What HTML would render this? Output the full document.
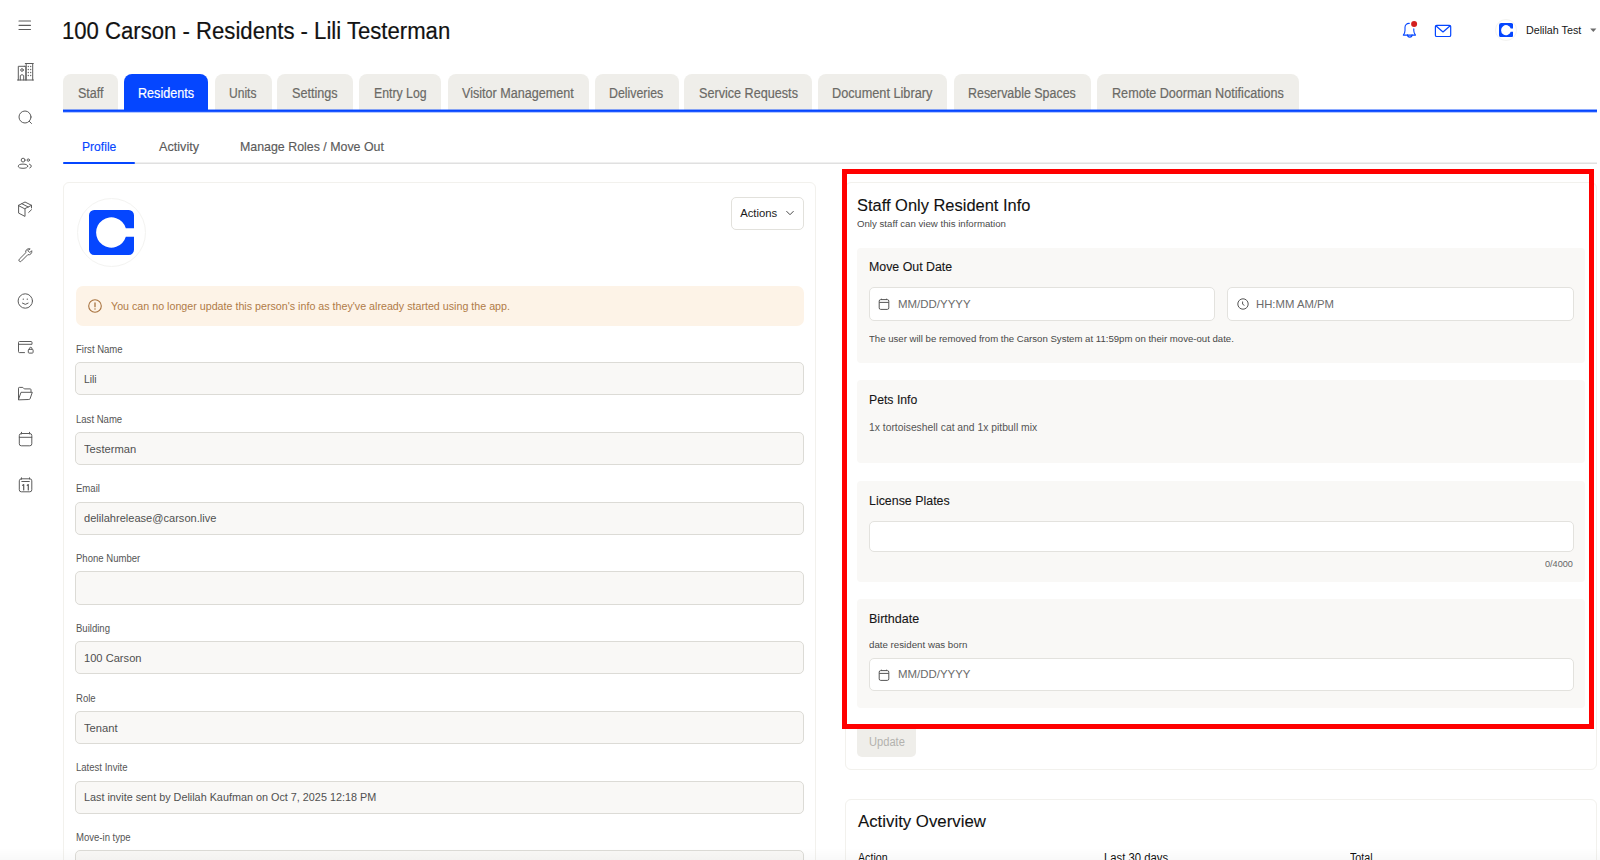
<!DOCTYPE html>
<html><head><meta charset="utf-8"><title>100 Carson - Residents - Lili Testerman</title>
<style>
html,body{margin:0;padding:0;background:#fff;width:1600px;height:860px;overflow:hidden;position:relative}
body{font-family:"Liberation Sans", sans-serif}
.t{position:absolute;white-space:nowrap}
.r{position:absolute}
</style></head><body>
<svg class="r" style="left:15px;top:15px" width="20" height="20" viewBox="0 0 20 20"><g fill="none" stroke="#5c5c5c" stroke-width="1.15" stroke-linecap="round"><path d="M4 6h11.5M4 10.3h11.5M4 14.5h11.5"/></g></svg>
<svg class="r" style="left:15px;top:61px" width="20" height="20" viewBox="0 0 20 20"><g fill="none" stroke="#5c5c5c" stroke-width="1.0" stroke-linecap="round" stroke-linejoin="round"><path d="M2.5 19h16M3.3 19V5.3h7.5V19M9.8 5.3v0M11.2 19V2.5h6.5V19M10.3 2.5h8"/><circle cx="7" cy="9" r="1.3"/><path d="M5.3 19v-4.5q1.7-1.7 3.4 0V19"/><path d="M13.3 5.5v.1M15.7 5.5v.1M13.3 8.5v.1M15.7 8.5v.1M13.3 11.5v.1M15.7 11.5v.1M13.3 14.5v.1M15.7 14.5v.1" stroke-width="1.3"/></g></svg>
<svg class="r" style="left:15px;top:107px" width="20" height="20" viewBox="0 0 20 20"><g fill="none" stroke="#5c5c5c" stroke-width="1.0" stroke-linecap="round" stroke-linejoin="round"><circle cx="10" cy="10" r="6"/><path d="M14.3 14.3l2.2 2.2"/></g></svg>
<svg class="r" style="left:15px;top:153px" width="20" height="20" viewBox="0 0 20 20"><g fill="none" stroke="#5c5c5c" stroke-width="1.0" stroke-linecap="round" stroke-linejoin="round"><circle cx="8.1" cy="7.1" r="1.9"/><circle cx="13.3" cy="7.1" r="1.2"/><ellipse cx="8" cy="13.2" rx="4.7" ry="2.1"/><path d="M14.5 11.2q1.8.6 1.8 1.9t-1.5 1.9"/></g></svg>
<svg class="r" style="left:15px;top:199px" width="20" height="20" viewBox="0 0 20 20"><g fill="none" stroke="#5c5c5c" stroke-width="1.0" stroke-linecap="round" stroke-linejoin="round"><path d="M3.6 6.3L10 3l6.5 3.3L10 9.6z"/><path d="M3.6 6.3v7.8L10 17.4V9.6"/><path d="M6.8 4.7l6.4 3.3"/><path d="M16.5 6.3v2.6M16.5 10.7l-2.8 2.7"/></g></svg>
<svg class="r" style="left:15px;top:245px" width="20" height="20" viewBox="0 0 20 20"><g fill="none" stroke="#5c5c5c" stroke-width="1.0" stroke-linecap="round" stroke-linejoin="round"><path d="M14.8 3.8a3.2 3.2 0 0 0-4 3.9L4.3 14.2a1.4 1.4 0 0 0 2 2l6.5-6.5a3.2 3.2 0 0 0 3.9-4l-1.9 1.9-1.8-1.8z"/></g></svg>
<svg class="r" style="left:15px;top:291px" width="20" height="20" viewBox="0 0 20 20"><g fill="none" stroke="#5c5c5c" stroke-width="1.0" stroke-linecap="round" stroke-linejoin="round"><circle cx="10.3" cy="10" r="7.2"/><path d="M7.4 12.2q2.9 2.6 5.8 0"/><path d="M8.3 8.1v.1M12.3 8.1v.1" stroke-width="1.3"/></g></svg>
<svg class="r" style="left:15px;top:337px" width="20" height="20" viewBox="0 0 20 20"><g fill="none" stroke="#5c5c5c" stroke-width="1.0" stroke-linecap="round" stroke-linejoin="round"><path d="M9.5 15.6H4.5a1 1 0 0 1-1-1V5.5a1 1 0 0 1 1-1h11.5a1 1 0 0 1 1 1v1.8H3.5"/><rect x="13.3" y="12.3" width="4.8" height="3.8" rx=".8"/><path d="M14.5 12.3v-.8a1.2 1.2 0 0 1 2.4 0v.8"/></g></svg>
<svg class="r" style="left:15px;top:383px" width="20" height="20" viewBox="0 0 20 20"><g fill="none" stroke="#5c5c5c" stroke-width="1.0" stroke-linecap="round" stroke-linejoin="round"><path d="M3.5 16.5V5.2a.8.8 0 0 1 .8-.8h3.5l1.5 1.5h5.9a.8.8 0 0 1 .8.8v2"/><path d="M3.5 16.5l2.5-7.2h11.3l-2.3 6.6a.8.8 0 0 1-.8.6z"/></g></svg>
<svg class="r" style="left:15px;top:429px" width="20" height="20" viewBox="0 0 20 20"><g fill="none" stroke="#5c5c5c" stroke-width="1.0" stroke-linecap="round" stroke-linejoin="round"><rect x="4.3" y="4.5" width="12.5" height="12.3" rx="2"/><path d="M4.3 8.3h12.5M6.5 3.3v1.6M14.5 3.3v1.6"/></g></svg>
<svg class="r" style="left:15px;top:475px" width="20" height="20" viewBox="0 0 20 20"><g fill="none" stroke="#5c5c5c" stroke-width="1.0" stroke-linecap="round" stroke-linejoin="round"><rect x="4.3" y="3.8" width="12.5" height="13" rx="2"/><path d="M6.8 6.5h7.5M6.5 2.8v1.2M14.5 2.8v1.2"/><path d="M7.7 10.3l1-.7v5.3M12.3 10.3l1-.7v5.3" stroke-width="1.2"/></g></svg>
<div class="t" style="left:62.06px;top:20px;font-size:23.5px;line-height:23.5px;color:#121212;transform:scaleX(0.9416);transform-origin:0 0;-webkit-text-stroke:0.2px #121212;">100 Carson - Residents - Lili Testerman</div>
<svg class="r" style="left:1400px;top:20px" width="20" height="20" viewBox="0 0 20 20"><g fill="none" stroke="#0546ff" stroke-width="1.1" stroke-linecap="round" stroke-linejoin="round"><path d="M9.3 3.4a3.8 3.8 0 0 0-4.3 3.8v3.3q0 2.4-1.7 4.6h12.2q-1.7-2.2-1.7-4.3V8.9"/><path d="M7.5 14.8a2.3 2.3 0 0 0 4.6 0"/></g><circle cx="14.1" cy="4.1" r="3" fill="#d3201f"/></svg>
<svg class="r" style="left:1433px;top:23px" width="20" height="16" viewBox="0 0 20 16"><rect x="2.4" y="2.3" width="15.3" height="11.2" rx="1.3" fill="none" stroke="#0546ff" stroke-width="1.2"/><path d="M2.8 2.8l7.2 6.2 7.2-6.2" fill="none" stroke="#0546ff" stroke-width="1.2" stroke-linejoin="round"/></svg>
<div class="r" style="left:1495px;top:19px;width:22px;height:22px;border-radius:50%;border:1px solid #f3f3f1;box-sizing:border-box"></div>
<svg class="r" style="left:1499px;top:23.2px" width="14.3" height="14.3" viewBox="0 0 100 100"><path fill="#0546ff" d="M16 0H84A16 16 0 0 1 100 16V38H82.38A35 35 0 1 0 82.38 62H100V84A16 16 0 0 1 84 100H16A16 16 0 0 1 0 84V16A16 16 0 0 1 16 0z"/></svg>
<div class="t" style="left:1525.70px;top:25px;font-size:11.3px;line-height:11.3px;color:#161616;transform:scaleX(0.9492);transform-origin:0 0;">Delilah Test</div>
<svg class="r" style="left:1588px;top:26px" width="10" height="8" viewBox="0 0 10 8"><path d="M2.2 2.4h6.2L5.3 6.1z" fill="#6c6c6c"/></svg>
<div class="r" style="left:63px;top:73.8px;width:55px;height:36.2px;background:#efeeea;border-radius:8px 8px 0 0"></div>
<div class="t" style="left:77.70px;top:86px;font-size:14px;line-height:14px;color:#6b6a66;transform:scaleX(0.8931);transform-origin:0 0;-webkit-text-stroke:0.2px #6b6a66;">Staff</div>
<div class="r" style="left:124px;top:73.8px;width:84.3px;height:36.2px;background:#0546ff;border-radius:8px 8px 0 0"></div>
<div class="t" style="left:138.40px;top:86px;font-size:14px;line-height:14px;color:#ffffff;transform:scaleX(0.9000);transform-origin:0 0;-webkit-text-stroke:0.2px #ffffff;">Residents</div>
<div class="r" style="left:214.8px;top:73.8px;width:57.4px;height:36.2px;background:#efeeea;border-radius:8px 8px 0 0"></div>
<div class="t" style="left:229.40px;top:86px;font-size:14px;line-height:14px;color:#6b6a66;transform:scaleX(0.8625);transform-origin:0 0;-webkit-text-stroke:0.2px #6b6a66;">Units</div>
<div class="r" style="left:277.4px;top:73.8px;width:75.6px;height:36.2px;background:#efeeea;border-radius:8px 8px 0 0"></div>
<div class="t" style="left:292.30px;top:86px;font-size:14px;line-height:14px;color:#6b6a66;transform:scaleX(0.9020);transform-origin:0 0;-webkit-text-stroke:0.2px #6b6a66;">Settings</div>
<div class="r" style="left:359.4px;top:73.8px;width:81.6px;height:36.2px;background:#efeeea;border-radius:8px 8px 0 0"></div>
<div class="t" style="left:374.00px;top:86px;font-size:14px;line-height:14px;color:#6b6a66;transform:scaleX(0.8783);transform-origin:0 0;-webkit-text-stroke:0.2px #6b6a66;">Entry Log</div>
<div class="r" style="left:447.5px;top:73.8px;width:141.0px;height:36.2px;background:#efeeea;border-radius:8px 8px 0 0"></div>
<div class="t" style="left:461.80px;top:86px;font-size:14px;line-height:14px;color:#6b6a66;transform:scaleX(0.8992);transform-origin:0 0;-webkit-text-stroke:0.2px #6b6a66;">Visitor Management</div>
<div class="r" style="left:594.9px;top:73.8px;width:84.0px;height:36.2px;background:#efeeea;border-radius:8px 8px 0 0"></div>
<div class="t" style="left:609.20px;top:86px;font-size:14px;line-height:14px;color:#6b6a66;transform:scaleX(0.8823);transform-origin:0 0;-webkit-text-stroke:0.2px #6b6a66;">Deliveries</div>
<div class="r" style="left:684.2px;top:73.8px;width:128.1px;height:36.2px;background:#efeeea;border-radius:8px 8px 0 0"></div>
<div class="t" style="left:698.50px;top:86px;font-size:14px;line-height:14px;color:#6b6a66;transform:scaleX(0.9018);transform-origin:0 0;-webkit-text-stroke:0.2px #6b6a66;">Service Requests</div>
<div class="r" style="left:818.3px;top:73.8px;width:129.0px;height:36.2px;background:#efeeea;border-radius:8px 8px 0 0"></div>
<div class="t" style="left:832.40px;top:86px;font-size:14px;line-height:14px;color:#6b6a66;transform:scaleX(0.9081);transform-origin:0 0;-webkit-text-stroke:0.2px #6b6a66;">Document Library</div>
<div class="r" style="left:953.8px;top:73.8px;width:136.8px;height:36.2px;background:#efeeea;border-radius:8px 8px 0 0"></div>
<div class="t" style="left:968.40px;top:86px;font-size:14px;line-height:14px;color:#6b6a66;transform:scaleX(0.8877);transform-origin:0 0;-webkit-text-stroke:0.2px #6b6a66;">Reservable Spaces</div>
<div class="r" style="left:1097px;top:73.8px;width:201.6px;height:36.2px;background:#efeeea;border-radius:8px 8px 0 0"></div>
<div class="t" style="left:1111.70px;top:86px;font-size:14px;line-height:14px;color:#6b6a66;transform:scaleX(0.9016);transform-origin:0 0;-webkit-text-stroke:0.2px #6b6a66;">Remote Doorman Notifications</div>
<div class="r" style="left:63px;top:109px;width:1534.2px;height:4px;background:linear-gradient(to bottom, rgba(5,70,255,.45) 0px, rgba(5,70,255,.45) 1px, #0546ff 1px, #0546ff 2px, rgba(5,70,255,.9) 2px, rgba(5,70,255,.9) 3px, rgba(5,70,255,.3) 3px, rgba(5,70,255,.3) 4px)"></div>
<div class="t" style="left:81.80px;top:141px;font-size:12.8px;line-height:12.8px;color:#0546ff;transform:scaleX(0.9459);transform-origin:0 0;-webkit-text-stroke:0.15px #0546ff;">Profile</div>
<div class="t" style="left:158.50px;top:141px;font-size:12.8px;line-height:12.8px;color:#5b5b5b;transform:scaleX(0.9878);transform-origin:0 0;-webkit-text-stroke:0.15px #5b5b5b;">Activity</div>
<div class="t" style="left:240.40px;top:141px;font-size:12.8px;line-height:12.8px;color:#5b5b5b;transform:scaleX(0.9678);transform-origin:0 0;-webkit-text-stroke:0.15px #5b5b5b;">Manage Roles / Move Out</div>
<div class="r" style="left:63px;top:162px;width:1534.2px;height:2px;background:linear-gradient(to bottom, #efefef 0px, #efefef 1px, #e0e0e0 1px, #e0e0e0 2px)"></div>
<div class="r" style="left:63px;top:162px;width:72px;height:2.2px;background:#0546ff;border-radius:1px"></div>
<div class="r" style="left:63px;top:182px;width:753px;height:720px;border:1px solid #f2f1ed;border-radius:6px;box-sizing:border-box;background:#fff"></div>
<div class="r" style="left:77px;top:197.8px;width:69px;height:69px;border-radius:50%;border:1px solid #f3f3f1;box-sizing:border-box"></div>
<svg class="r" style="left:89px;top:210px" width="45" height="45" viewBox="0 0 100 100"><path fill="#0546ff" d="M11.5 0H88.5A11.5 11.5 0 0 1 100 11.5V40.5H81.83A33.7 33.7 0 1 0 81.83 59.5H100V88.5A11.5 11.5 0 0 1 88.5 100H11.5A11.5 11.5 0 0 1 0 88.5V11.5A11.5 11.5 0 0 1 11.5 0z"/></svg>
<div class="r" style="left:730.5px;top:197.1px;width:73.2px;height:32.5px;border:1px solid #e2e1dc;border-radius:5px;box-sizing:border-box;background:#fff"></div>
<div class="t" style="left:740.20px;top:208px;font-size:11.3px;line-height:11.3px;color:#1a1a1a;transform:scaleX(1.0000);transform-origin:0 0;">Actions</div>
<svg class="r" style="left:784px;top:208px" width="12" height="10" viewBox="0 0 12 10"><path d="M2.7 3.4l3.3 3.3 3.3-3.3" fill="none" stroke="#333" stroke-width="0.9" stroke-linecap="round" stroke-linejoin="round"/></svg>
<div class="r" style="left:75.8px;top:286px;width:728.2px;height:40px;background:#fdf3e7;border-radius:7px"></div>
<svg class="r" style="left:87px;top:298px" width="16" height="16" viewBox="0 0 16 16"><circle cx="8" cy="8" r="6.3" fill="none" stroke="#a8733f" stroke-width="1.1"/><path d="M8 4.9v3.8" stroke="#a8733f" stroke-width="1.3" stroke-linecap="round"/><circle cx="8" cy="10.9" r=".75" fill="#a8733f"/></svg>
<div class="t" style="left:110.50px;top:301px;font-size:11px;line-height:11px;color:#b07b47;transform:scaleX(0.9720);transform-origin:0 0;">You can no longer update this person's info as they've already started using the app.</div>
<div class="t" style="left:75.60px;top:345px;font-size:10px;line-height:10px;color:#555;transform:scaleX(0.9531);transform-origin:0 0;">First Name</div>
<div class="r" style="left:75.1px;top:362.2px;width:728.9px;height:33.3px;background:#f9f8f6;border:1px solid #dcdbd6;border-radius:5px;box-sizing:border-box"></div>
<div class="t" style="left:84.20px;top:374px;font-size:11.3px;line-height:11.3px;color:#505050;transform:scaleX(0.9107);transform-origin:0 0;">Lili</div>
<div class="t" style="left:75.60px;top:415px;font-size:10px;line-height:10px;color:#555;transform:scaleX(0.9550);transform-origin:0 0;">Last Name</div>
<div class="r" style="left:75.1px;top:431.94px;width:728.9px;height:33.3px;background:#f9f8f6;border:1px solid #dcdbd6;border-radius:5px;box-sizing:border-box"></div>
<div class="t" style="left:84.20px;top:444px;font-size:11.3px;line-height:11.3px;color:#505050;transform:scaleX(0.9906);transform-origin:0 0;">Testerman</div>
<div class="t" style="left:75.60px;top:484px;font-size:10px;line-height:10px;color:#555;transform:scaleX(0.9550);transform-origin:0 0;">Email</div>
<div class="r" style="left:75.1px;top:501.68px;width:728.9px;height:33.3px;background:#f9f8f6;border:1px solid #dcdbd6;border-radius:5px;box-sizing:border-box"></div>
<div class="t" style="left:84.20px;top:513px;font-size:11.3px;line-height:11.3px;color:#505050;transform:scaleX(0.9793);transform-origin:0 0;">delilahrelease@carson.live</div>
<div class="t" style="left:75.60px;top:554px;font-size:10px;line-height:10px;color:#555;transform:scaleX(0.9550);transform-origin:0 0;">Phone Number</div>
<div class="r" style="left:75.1px;top:571.42px;width:728.9px;height:33.3px;background:#f9f8f6;border:1px solid #dcdbd6;border-radius:5px;box-sizing:border-box"></div>
<div class="t" style="left:75.60px;top:624px;font-size:10px;line-height:10px;color:#555;transform:scaleX(0.9550);transform-origin:0 0;">Building</div>
<div class="r" style="left:75.1px;top:641.16px;width:728.9px;height:33.3px;background:#f9f8f6;border:1px solid #dcdbd6;border-radius:5px;box-sizing:border-box"></div>
<div class="t" style="left:84.20px;top:653px;font-size:11.3px;line-height:11.3px;color:#505050;transform:scaleX(0.9845);transform-origin:0 0;">100 Carson</div>
<div class="t" style="left:75.60px;top:694px;font-size:10px;line-height:10px;color:#555;transform:scaleX(0.9550);transform-origin:0 0;">Role</div>
<div class="r" style="left:75.1px;top:710.9px;width:728.9px;height:33.3px;background:#f9f8f6;border:1px solid #dcdbd6;border-radius:5px;box-sizing:border-box"></div>
<div class="t" style="left:84.20px;top:723px;font-size:11.3px;line-height:11.3px;color:#505050;transform:scaleX(0.9926);transform-origin:0 0;">Tenant</div>
<div class="t" style="left:75.60px;top:763px;font-size:10px;line-height:10px;color:#555;transform:scaleX(0.9550);transform-origin:0 0;">Latest Invite</div>
<div class="r" style="left:75.1px;top:780.64px;width:728.9px;height:33.3px;background:#f9f8f6;border:1px solid #dcdbd6;border-radius:5px;box-sizing:border-box"></div>
<div class="t" style="left:84.20px;top:792px;font-size:11.3px;line-height:11.3px;color:#505050;transform:scaleX(0.9574);transform-origin:0 0;">Last invite sent by Delilah Kaufman on Oct 7, 2025 12:18 PM</div>
<div class="t" style="left:75.60px;top:833px;font-size:10px;line-height:10px;color:#555;transform:scaleX(0.9550);transform-origin:0 0;">Move-in type</div>
<div class="r" style="left:75.1px;top:850.38px;width:728.9px;height:33.3px;background:#f9f8f6;border:1px solid #dcdbd6;border-radius:5px;box-sizing:border-box"></div>
<div class="r" style="left:844.5px;top:182px;width:752.7px;height:588px;border:1px solid #f2f1ed;border-radius:6px;box-sizing:border-box;background:#fff"></div>
<div class="t" style="left:857.20px;top:197px;font-size:16.4px;line-height:16.4px;color:#111;transform:scaleX(1.0035);transform-origin:0 0;-webkit-text-stroke:0.1px #111;">Staff Only Resident Info</div>
<div class="t" style="left:857.00px;top:219px;font-size:9.7px;line-height:9.7px;color:#4a4a4a;transform:scaleX(0.9960);transform-origin:0 0;">Only staff can view this information</div>
<div class="r" style="left:857px;top:247.5px;width:727.6px;height:115.2px;background:#f9f8f6;border-radius:4px"></div>
<div class="t" style="left:868.90px;top:261px;font-size:12px;line-height:12px;color:#161616;transform:scaleX(1.0296);transform-origin:0 0;-webkit-text-stroke:0.1px #161616;">Move Out Date</div>
<div class="r" style="left:868.5px;top:287.2px;width:346.3px;height:33.6px;background:#fff;border:1px solid #e3e2de;border-radius:5px;box-sizing:border-box"></div>
<div class="r" style="left:1226.8px;top:287.2px;width:346.8px;height:33.6px;background:#fff;border:1px solid #e3e2de;border-radius:5px;box-sizing:border-box"></div>
<svg class="r" style="left:878px;top:298.3px" width="12" height="12" viewBox="0 0 12 12"><rect x="1.2" y="1.6" width="9.6" height="9.8" rx="1.5" fill="none" stroke="#555" stroke-width="1"/><path d="M1.2 4.4h9.6M3.4.7v1.2M8.6.7v1.2" fill="none" stroke="#555" stroke-width="1"/></svg>
<div class="t" style="left:897.60px;top:299px;font-size:11.5px;line-height:11.5px;color:#6b6b6b;transform:scaleX(0.9959);transform-origin:0 0;">MM/DD/YYYY</div>
<svg class="r" style="left:1237px;top:298px" width="12" height="12" viewBox="0 0 12 12"><circle cx="6" cy="6" r="5.2" fill="none" stroke="#555" stroke-width="1"/><path d="M5.6 3.9V6.2l1.5 1" fill="none" stroke="#555" stroke-width="1" stroke-linecap="round"/></svg>
<div class="t" style="left:1255.90px;top:299px;font-size:11.5px;line-height:11.5px;color:#6b6b6b;transform:scaleX(0.9848);transform-origin:0 0;">HH:MM AM/PM</div>
<div class="t" style="left:869.20px;top:334px;font-size:9.6px;line-height:9.6px;color:#484848;transform:scaleX(1.0008);transform-origin:0 0;">The user will be removed from the Carson System at 11:59pm on their move-out date.</div>
<div class="r" style="left:857px;top:380px;width:727.6px;height:82.8px;background:#f9f8f6;border-radius:4px"></div>
<div class="t" style="left:868.80px;top:394px;font-size:12.2px;line-height:12.2px;color:#161616;transform:scaleX(1.0042);transform-origin:0 0;-webkit-text-stroke:0.1px #161616;">Pets Info</div>
<div class="t" style="left:868.80px;top:423px;font-size:10.4px;line-height:10.4px;color:#555;transform:scaleX(0.9935);transform-origin:0 0;">1x tortoiseshell cat and 1x pitbull mix</div>
<div class="r" style="left:857px;top:481px;width:727.6px;height:100.6px;background:#f9f8f6;border-radius:4px"></div>
<div class="t" style="left:868.80px;top:495px;font-size:12.5px;line-height:12.5px;color:#161616;transform:scaleX(0.9927);transform-origin:0 0;-webkit-text-stroke:0.1px #161616;">License Plates</div>
<div class="r" style="left:868.5px;top:521.2px;width:705px;height:31.2px;background:#fff;border:1px solid #e3e2de;border-radius:5px;box-sizing:border-box"></div>
<div class="t" style="left:1545.00px;top:560px;font-size:9.3px;line-height:9.3px;color:#666;transform:scaleX(0.9828);transform-origin:0 0;">0/4000</div>
<div class="r" style="left:857px;top:599px;width:727.6px;height:109px;background:#f9f8f6;border-radius:4px"></div>
<div class="t" style="left:868.90px;top:613px;font-size:12.6px;line-height:12.6px;color:#161616;transform:scaleX(0.9941);transform-origin:0 0;-webkit-text-stroke:0.1px #161616;">Birthdate</div>
<div class="t" style="left:868.90px;top:640px;font-size:9.7px;line-height:9.7px;color:#4a4a4a;transform:scaleX(1.0031);transform-origin:0 0;">date resident was born</div>
<div class="r" style="left:868.5px;top:658px;width:705px;height:33.2px;background:#fff;border:1px solid #e3e2de;border-radius:5px;box-sizing:border-box"></div>
<svg class="r" style="left:878px;top:668.6px" width="12" height="12" viewBox="0 0 12 12"><rect x="1.2" y="1.6" width="9.6" height="9.8" rx="1.5" fill="none" stroke="#555" stroke-width="1"/><path d="M1.2 4.4h9.6M3.4.7v1.2M8.6.7v1.2" fill="none" stroke="#555" stroke-width="1"/></svg>
<div class="t" style="left:897.70px;top:669px;font-size:11.5px;line-height:11.5px;color:#6b6b6b;transform:scaleX(0.9945);transform-origin:0 0;">MM/DD/YYYY</div>
<div class="r" style="left:856.7px;top:724px;width:59.3px;height:33px;background:#efeeea;border-radius:5px"></div>
<div class="t" style="left:868.60px;top:736px;font-size:12px;line-height:12px;color:#b3b2ae;transform:scaleX(0.9256);transform-origin:0 0;">Update</div>
<div class="r" style="left:842.2px;top:169.4px;width:751.5px;height:559.8px;border:5.1px solid #ff0000;box-sizing:border-box"></div>
<div class="r" style="left:844.5px;top:798.5px;width:752.7px;height:200px;border:1px solid #f2f1ed;border-radius:6px;box-sizing:border-box;background:#fff"></div>
<div class="t" style="left:857.50px;top:814px;font-size:16.8px;line-height:16.8px;color:#111;transform:scaleX(1.0008);transform-origin:0 0;-webkit-text-stroke:0.1px #111;">Activity Overview</div>
<div class="t" style="left:858.00px;top:852px;font-size:12px;line-height:12px;color:#111;transform:scaleX(0.8897);transform-origin:0 0;">Action</div>
<div class="t" style="left:1103.60px;top:852px;font-size:12px;line-height:12px;color:#111;transform:scaleX(0.9412);transform-origin:0 0;">Last 30 days</div>
<div class="t" style="left:1350.40px;top:852px;font-size:12px;line-height:12px;color:#111;transform:scaleX(0.8923);transform-origin:0 0;">Total</div>
<div class="r" style="left:0px;top:848px;width:1600px;height:12px;background:linear-gradient(to bottom, rgba(0,0,0,0), rgba(0,0,0,0.025))"></div>
</body></html>
